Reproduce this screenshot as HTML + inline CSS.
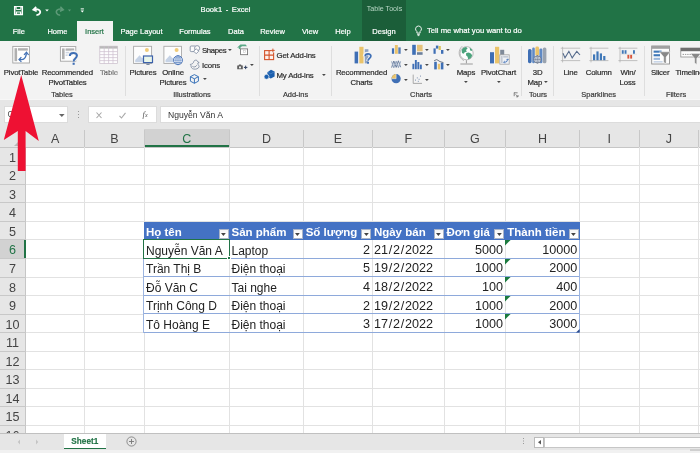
<!DOCTYPE html><html><head><meta charset="utf-8"><title>Excel</title><style>
*{margin:0;padding:0;box-sizing:border-box}
html,body{width:700px;height:453px;overflow:hidden;background:#fff}
body{font-family:"Liberation Sans",sans-serif;position:relative;color:#333;will-change:transform}
.a{position:absolute}
.t{position:absolute;white-space:nowrap;line-height:1}
.c{position:absolute;white-space:nowrap;line-height:1;text-align:center;transform:translateX(-50%)}
.rb{font-size:7.8px;letter-spacing:-0.15px;color:#2b2b2b;-webkit-text-stroke:0.2px #2b2b2b}
.gl{font-size:7.45px;color:#3a3a3a;-webkit-text-stroke:0.2px #3a3a3a}
.tab{font-size:7.5px;color:#fff;-webkit-text-stroke:0.2px currentColor}
.cell{font-size:12px;color:#222}
.num{font-size:12.6px}
.hd{font-size:11.5px;color:#fff;font-weight:bold}
.rh{font-size:12.6px;color:#3c3c3c}
.sep{position:absolute;width:1px;background:#dedede;top:46px;height:50px}
svg{position:absolute;overflow:visible}
</style></head><body>
<div class="a" style="left:0;top:0;width:700px;height:41px;background:#217346"></div>
<div class="a" style="left:362px;top:0;width:44px;height:41px;background:#1b5e39"></div>
<div class="a" style="left:77px;top:21px;width:35.5px;height:21px;background:#f3f3f3"></div>
<div class="c tab" style="left:225.5px;top:6px;font-size:7.6px;word-spacing:1.5px">Book1 - Excel</div>
<div class="c tab" style="left:384.5px;top:6.4px;font-size:7.1px;color:#b9d8c6;-webkit-text-stroke:0">Table Tools</div>
<div class="c tab" style="left:18.8px;top:27.5px;color:#fff">File</div>
<div class="c tab" style="left:57.4px;top:27.5px;color:#fff">Home</div>
<div class="c tab" style="left:94.5px;top:27.5px;color:#217346">Insert</div>
<div class="c tab" style="left:141.5px;top:27.5px;color:#fff">Page Layout</div>
<div class="c tab" style="left:195px;top:27.5px;color:#fff">Formulas</div>
<div class="c tab" style="left:236px;top:27.5px;color:#fff">Data</div>
<div class="c tab" style="left:272.5px;top:27.5px;color:#fff">Review</div>
<div class="c tab" style="left:310px;top:27.5px;color:#fff">View</div>
<div class="c tab" style="left:343px;top:27.5px;color:#fff">Help</div>
<div class="c tab" style="left:384px;top:27.5px;color:#fff">Design</div>
<div class="t tab" style="left:427px;top:27.4px;font-size:7.7px">Tell me what you want to do</div>
<svg style="left:414px;top:25px" width="9" height="12" viewBox="0 0 9 12"><path d="M4.5 1 a3 3 0 0 1 1.6 5.5 v1.6 h-3.2 v-1.6 a3 3 0 0 1 1.6 -5.5z M3.2 9.4h2.6 M3.6 10.6h1.8" fill="none" stroke="#fff" stroke-width="0.9"/></svg>
<svg style="left:13px;top:5px" width="80" height="12" viewBox="0 0 80 12"><path d="M1.7 1.7h7.6v7.8h-7.6z" fill="none" stroke="#fff" stroke-width="1.5"/><path d="M3.2 1.5h4.6v3h-4.6z" fill="#217346" stroke="#fff" stroke-width="0.9"/><path d="M3.4 9.6v-2.6h4.2v2.6" fill="none" stroke="#fff" stroke-width="1.1"/><path d="M23.2 1.8 l-2.9 2.9 l3.4 1.5 M20.6 4.7 c4-1.8 7.6 0.6 6.4 3.4 c-0.6 1.4-2 2-3.6 2.1" fill="none" stroke="#fff" stroke-width="1.7"/><path d="M32.2 4.4h3.6l-1.8 2.1z" fill="#fff"/><path d="M47.4 1.8 l2.9 2.9 l-3.4 1.5 M50 4.7 c-4-1.8-7.6 0.6-6.4 3.4 c0.6 1.4 2 2 3.6 2.1" fill="none" stroke="#5d9a78" stroke-width="1.5"/><path d="M55 4.6h3l-1.5 1.8z" fill="#5d9a78"/><path d="M67.7 3.9h3.2" stroke="#fff" stroke-width="1"/><path d="M67.6 5.6h3.4l-1.7 2z" fill="#fff"/></svg>
<div class="a" style="left:0;top:41px;width:700px;height:59px;background:#f3f3f3"></div>
<div class="a" style="left:0;top:99px;width:700px;height:1px;background:#f7f7f7"></div>
<div class="sep" style="left:124.6px"></div>
<div class="sep" style="left:259px"></div>
<div class="sep" style="left:330.6px"></div>
<div class="sep" style="left:521.3px"></div>
<div class="sep" style="left:553px"></div>
<div class="sep" style="left:643.6px"></div>
<div class="c rb" style="left:21px;top:68.9px;">PivotTable</div>
<div class="c rb" style="left:67.3px;top:68.9px;">Recommended</div>
<div class="c rb" style="left:67.5px;top:79.0px;">PivotTables</div>
<div class="c rb" style="left:109px;top:68.9px;color:#b0b0b0">Table</div>
<div class="c gl" style="left:62px;top:90.6px;">Tables</div>
<div class="c rb" style="left:143px;top:68.9px;">Pictures</div>
<div class="c rb" style="left:173px;top:68.9px;">Online</div>
<div class="c rb" style="left:173px;top:79.0px;">Pictures</div>
<div class="t rb" style="left:202px;top:46.5px;letter-spacing:-0.38px">Shapes</div>
<div class="t rb" style="left:202px;top:61.6px;">Icons</div>
<div class="c gl" style="left:192px;top:90.6px;">Illustrations</div>
<div class="t rb" style="left:276.5px;top:52px;">Get Add-ins</div>
<div class="t rb" style="left:276.5px;top:72px;">My Add-ins</div>
<div class="c gl" style="left:295.5px;top:90.6px;">Add-ins</div>
<div class="c rb" style="left:361.5px;top:68.9px;">Recommended</div>
<div class="c rb" style="left:361.5px;top:79.0px;">Charts</div>
<div class="c gl" style="left:421px;top:90.6px;">Charts</div>
<div class="c rb" style="left:466px;top:68.9px;">Maps</div>
<div class="c rb" style="left:498.5px;top:68.9px;">PivotChart</div>
<div class="c rb" style="left:537.7px;top:68.9px;">3D</div>
<div class="t rb" style="left:527.5px;top:79.0px;">Map</div>
<div class="c gl" style="left:538px;top:90.6px;">Tours</div>
<div class="c rb" style="left:570.5px;top:68.9px;">Line</div>
<div class="c rb" style="left:598.7px;top:68.9px;">Column</div>
<div class="c rb" style="left:628px;top:68.9px;">Win/</div>
<div class="c rb" style="left:627.5px;top:79.0px;">Loss</div>
<div class="c gl" style="left:598.7px;top:90.6px;">Sparklines</div>
<div class="c rb" style="left:660.2px;top:68.9px;">Slicer</div>
<div class="t rb" style="left:675.5px;top:68.9px;">Timeline</div>
<div class="c gl" style="left:676px;top:90.6px;">Filters</div>
<svg style="left:227.6px;top:49px" width="3.8" height="2.1" viewBox="0 0 3.8 2.1"><path d="M0 0h3.8l-1.9 2.1z" fill="#484848"/></svg>
<svg style="left:203.4px;top:78.3px" width="3.8" height="2.1" viewBox="0 0 3.8 2.1"><path d="M0 0h3.8l-1.9 2.1z" fill="#484848"/></svg>
<svg style="left:249.79999999999998px;top:63.7px" width="3.8" height="2.1" viewBox="0 0 3.8 2.1"><path d="M0 0h3.8l-1.9 2.1z" fill="#484848"/></svg>
<svg style="left:322.1px;top:74px" width="3.8" height="2.1" viewBox="0 0 3.8 2.1"><path d="M0 0h3.8l-1.9 2.1z" fill="#484848"/></svg>
<svg style="left:403.70000000000005px;top:49px" width="3.8" height="2.1" viewBox="0 0 3.8 2.1"><path d="M0 0h3.8l-1.9 2.1z" fill="#484848"/></svg>
<svg style="left:403.70000000000005px;top:64px" width="3.8" height="2.1" viewBox="0 0 3.8 2.1"><path d="M0 0h3.8l-1.9 2.1z" fill="#484848"/></svg>
<svg style="left:403.70000000000005px;top:78.5px" width="3.8" height="2.1" viewBox="0 0 3.8 2.1"><path d="M0 0h3.8l-1.9 2.1z" fill="#484848"/></svg>
<svg style="left:424.70000000000005px;top:49px" width="3.8" height="2.1" viewBox="0 0 3.8 2.1"><path d="M0 0h3.8l-1.9 2.1z" fill="#484848"/></svg>
<svg style="left:424.70000000000005px;top:64px" width="3.8" height="2.1" viewBox="0 0 3.8 2.1"><path d="M0 0h3.8l-1.9 2.1z" fill="#484848"/></svg>
<svg style="left:424.70000000000005px;top:78.5px" width="3.8" height="2.1" viewBox="0 0 3.8 2.1"><path d="M0 0h3.8l-1.9 2.1z" fill="#484848"/></svg>
<svg style="left:446.1px;top:49px" width="3.8" height="2.1" viewBox="0 0 3.8 2.1"><path d="M0 0h3.8l-1.9 2.1z" fill="#484848"/></svg>
<svg style="left:446.1px;top:64px" width="3.8" height="2.1" viewBox="0 0 3.8 2.1"><path d="M0 0h3.8l-1.9 2.1z" fill="#484848"/></svg>
<svg style="left:464.1px;top:81px" width="3.8" height="2.1" viewBox="0 0 3.8 2.1"><path d="M0 0h3.8l-1.9 2.1z" fill="#484848"/></svg>
<svg style="left:497.1px;top:81px" width="3.8" height="2.1" viewBox="0 0 3.8 2.1"><path d="M0 0h3.8l-1.9 2.1z" fill="#484848"/></svg>
<svg style="left:544.1px;top:80.5px" width="3.8" height="2.1" viewBox="0 0 3.8 2.1"><path d="M0 0h3.8l-1.9 2.1z" fill="#484848"/></svg>
<svg style="left:0;top:41px" width="700" height="59" viewBox="0 41 700 59">
<!-- PivotTable -->
<g>
<rect x="12.8" y="46.4" width="16.6" height="16.6" fill="#fff" stroke="#a3a3a3" stroke-width="0.9"/>
<rect x="14.5" y="48.2" width="2.6" height="13" fill="#b0b0b0"/>
<rect x="18" y="48.2" width="9.8" height="2.4" fill="#b0b0b0"/>
<path d="M19.6 59.6 H21.8 Q25.8 59.4 26.4 53.2" fill="none" stroke="#3f6fb5" stroke-width="1.4"/>
<path d="M21.4 57.3 L19 59.6 L21.4 61.9" fill="none" stroke="#3f6fb5" stroke-width="1.2"/>
<path d="M24 54.8 L26.5 52.2 L28.6 55" fill="none" stroke="#3f6fb5" stroke-width="1.2"/>
</g>
<!-- Recommended PivotTables -->
<g transform="translate(0.8 0)">
<rect x="59.6" y="46.6" width="15.4" height="14.6" fill="#fff" stroke="#a3a3a3" stroke-width="0.9"/>
<rect x="61.2" y="48.4" width="2.6" height="10.8" fill="#b0b0b0"/>
<rect x="64.8" y="48.4" width="8.6" height="2.3" fill="#b0b0b0"/>
<rect x="64.8" y="51.8" width="3.6" height="1.6" fill="#cfd6e2"/>
<rect x="64.8" y="54.4" width="3.6" height="1.6" fill="#cfd6e2"/>
<path d="M68.4 56 C68.4 51.4 76.8 51.4 76.8 55.6 C76.8 58.4 72.8 58.4 72.8 61.2" fill="none" stroke="#f3f3f3" stroke-width="3.8"/>
<path d="M69 56 C69 52 76.2 52 76.2 55.6 C76.2 58.4 72.8 58.6 72.8 61.4" fill="none" stroke="#3f6fb5" stroke-width="1.9"/>
<rect x="71.8" y="62.7" width="2.1" height="2.1" fill="#3f6fb5"/>
</g>
<!-- Table (disabled) -->
<g>
<rect x="99.8" y="46.2" width="17.6" height="17.4" fill="#fdfdfd" stroke="#c9bdca" stroke-width="0.7"/>
<rect x="99.8" y="46.2" width="17.6" height="2.4" fill="#b9b9b9"/>
<path d="M99.8 51.6h17.6M99.8 54.6h17.6M99.8 57.6h17.6M99.8 60.6h17.6M104.2 46.2v17.4M108.6 46.2v17.4M113 46.2v17.4" stroke="#cdbfce" stroke-width="0.7" fill="none"/>
</g>
<!-- Pictures -->
<g>
<rect x="133.6" y="46.3" width="18" height="17.2" fill="#fdfdfd" stroke="#a9a9a9" stroke-width="0.9"/>
<circle cx="146.9" cy="50.1" r="2" fill="#f0cb78"/>
<path d="M135.2 62.2 L135.2 60 L139.6 55.2 L142.2 58.2 L143.4 57.2 V62.2 Z" fill="#c6d3e6"/>
<rect x="143.5" y="56" width="9" height="6.6" fill="#e9f6ea" stroke="#3d62ab" stroke-width="1.2"/>
<rect x="146.4" y="63.9" width="3.2" height="0.9" fill="#5b6f8f"/>
</g>
<!-- Online Pictures -->
<g>
<rect x="163.9" y="46.3" width="17.6" height="17.2" fill="#fdfdfd" stroke="#a9a9a9" stroke-width="0.9"/>
<circle cx="176.6" cy="50.1" r="2" fill="#f0cb78"/>
<path d="M165.5 62.2 L165.5 60 L169.9 55.2 L172.5 58.2 L173.7 57.2 V62.2 Z" fill="#c6d3e6"/>
<circle cx="178" cy="60.2" r="4.5" fill="#f4f8fd" stroke="#4672b8" stroke-width="0.9"/>
<path d="M173.5 60.2h9M178 55.7v9M174.4 57.9h7.2M174.4 62.5h7.2" stroke="#4672b8" stroke-width="0.55" fill="none"/>
<ellipse cx="178" cy="60.2" rx="2.1" ry="4.5" fill="none" stroke="#4672b8" stroke-width="0.55"/>
</g>
<!-- Shapes -->
<g fill="#fbfbfb" stroke="#76849a" stroke-width="0.8">
<rect x="190.2" y="46" width="5.6" height="5.6" rx="1"/>
<circle cx="197.1" cy="48.2" r="2.6"/>
<path d="M196.2 48.7 l2.5 2.5 l-2.5 2.5 l-2.5-2.5z" fill="#fff"/>
</g>
<!-- Icons (bird) -->
<g fill="none" stroke="#76849a" stroke-width="0.8">
<path d="M193.6 62.2 c0.2-2.6 4-2.8 4.2-0.2 l1.4 0.6 l-1.5 0.8 c0.4 1.8 1.6 2.2 1.4 3.4 c-0.4 1.8-3.2 2.8-5.6 2.2 c-1.8-0.4-2.6-1.8-2.4-3.2 l-0.8-1.4 c1.4-0.2 2.6-0.6 3.3-2.2z"/>
<path d="M192.4 66.4 c1.4 1 3.6 0.6 4.4-1.2"/>
</g>
<!-- 3D models (cube) -->
<g fill="none" stroke="#3a73b9" stroke-width="1">
<path d="M194.4 74.6 l4 2.1 v4.5 l-4 2.1 l-4-2.1 v-4.5z"/>
<path d="M190.4 76.7 l4 2.1 l4-2.1 M194.4 78.8v4.5"/>
</g>
<!-- SmartArt -->
<g>
<path d="M237 47.8 l3.4-3.2 h5.2 l1.4 1.7 h-4.8 l-1.6 1 l0 2 l-1.8-0.2 l0 -1.5z" fill="#5aa886"/>
<rect x="240.6" y="48.9" width="7" height="5.8" fill="#fff" stroke="#6a6a6a" stroke-width="0.8"/>
<rect x="243.4" y="50.7" width="2" height="1.9" fill="none" stroke="#bdbdbd" stroke-width="0.5"/>
</g>
<!-- Screenshot -->
<g>
<rect x="239.2" y="60.4" width="6.2" height="4" fill="#f9f9f9"/>
<path d="M237.2 65.5 h1.3 l0.6-1 h1.9 l0.6 1 h1.2 v3.8 h-5.6z" fill="#5f5f5f"/>
<circle cx="240" cy="67.4" r="1.05" fill="#f3f3f3"/>
<path d="M243.9 67.4h3.5M245.65 65.65v3.5" stroke="#2f3f5f" stroke-width="1"/>
</g>
<!-- Get Add-ins -->
<g fill="none" stroke="#d4552d" stroke-width="1.1">
<rect x="264.6" y="50.6" width="9" height="9" fill="#fdf1ec"/>
<path d="M264.6 55.1h9M269.1 50.6v9"/>
<path d="M271.4 51.2 h2.6 v-2.4" stroke="#f3f3f3" stroke-width="2.4"/>
<path d="M272.9 48.6v3.6M271.1 50.4h3.6" stroke-width="1"/>
</g>
<!-- My Add-ins -->
<g fill="#1b5fae">
<path d="M267.4 72.2 l3.6-2.4 l3.6 1.8 v4.8 l-3.8 2.2 l-3.4-1.6z"/>
<circle cx="266.5" cy="76.8" r="2.5" stroke="#f3f3f3" stroke-width="0.7"/>
<path d="M267.8 72.3 l3 1.5 l3.4-2" fill="none" stroke="#6c9ad2" stroke-width="0.5"/>
</g>
<!-- Recommended Charts -->
<g>
<rect x="354.6" y="51.6" width="3.5" height="11.8" fill="#3f6fb5"/>
<rect x="359.3" y="46.8" width="4.2" height="16.6" fill="#eac36a"/>
<rect x="364.8" y="49.2" width="3.6" height="14.2" fill="#8fa3c2"/>
<path d="M364.6 56.3 C364.6 52.6 371.4 52.6 371.4 56 C371.4 58.4 368 58.4 368 61" fill="none" stroke="#f3f3f3" stroke-width="3.6"/>
<path d="M365.2 56.3 C365.2 53.2 370.9 53.2 370.9 56 C370.9 58.2 368 58.4 368 60.8" fill="none" stroke="#3f6fb5" stroke-width="1.7"/>
<rect x="367.1" y="61.9" width="1.9" height="1.8" fill="#3f6fb5"/>
</g>
<!-- small chart icons row1 -->
<g>
<rect x="391.9" y="48.3" width="2.2" height="5.5" fill="#3f6fb5"/>
<rect x="394.9" y="45" width="2.9" height="8.8" fill="#eac36a"/>
<rect x="398.3" y="47.4" width="2.4" height="6.4" fill="#5b7fb5"/>
<rect x="412.2" y="44.8" width="3.6" height="10" fill="#3f6fb5"/>
<rect x="417" y="44.8" width="5.6" height="6.5" fill="#e6c27a"/>
<rect x="417" y="52.2" width="5.6" height="2.6" fill="#6b7f9c"/>
<rect x="433.5" y="48.4" width="2.2" height="5.4" fill="#3f6fb5"/>
<rect x="435.9" y="45.6" width="2.5" height="3" fill="#3f6fb5"/>
<rect x="438.6" y="46" width="2.2" height="4" fill="#d9c25a"/>
<rect x="441" y="50" width="2.4" height="3.8" fill="#3f6fb5"/>
</g>
<!-- row2 -->
<g>
<path d="M391.6 67.6 l2.2-6.6 l2.4 6.4 l2.2-6.6 l2.2 6.4" fill="none" stroke="#5f7496" stroke-width="0.9"/>
<path d="M391.6 61.4 l2.2 6.4 l2.4-6.6 l2.2 6.4 l2.2-6.2" fill="none" stroke="#8296b6" stroke-width="0.9"/>
<path d="M391.6 64.4 h9" stroke="#b5c2d6" stroke-width="0.5"/>
<rect x="412.4" y="63.8" width="1.9" height="5.4" fill="#3f6fb5"/>
<rect x="414.9" y="60" width="1.9" height="9.2" fill="#3f6fb5"/>
<rect x="417.4" y="62" width="1.9" height="7.2" fill="#3f6fb5"/>
<rect x="419.9" y="64.6" width="1.9" height="4.6" fill="#3f6fb5"/>
<rect x="434.2" y="61.8" width="2.6" height="7.6" fill="#3f6fb5"/>
<rect x="437.8" y="63.8" width="2.2" height="5.6" fill="#eac36a"/>
<rect x="440.8" y="62.8" width="2.6" height="6.6" fill="#3f6fb5"/>
<path d="M434.2 60.6 l2.6 -1 l3.2 2 l3.4 1" fill="none" stroke="#4a5568" stroke-width="0.8"/>
</g>
<!-- row3 -->
<g>
<circle cx="396.1" cy="78.7" r="4.6" fill="#3f6fb5"/>
<path d="M396.1 78.7 V74.1 A4.6 4.6 0 0 0 391.5 78.7 Z" fill="#eac36a"/>
<path d="M396.1 74.1 v4.6 h-4.6" fill="none" stroke="#f3f3f3" stroke-width="0.5"/>
<path d="M413.2 74.6 v8.8 h8.8" fill="none" stroke="#8a8a8a" stroke-width="0.7"/>
<g fill="#7d91b0"><rect x="415" y="79.6" width="1" height="1"/><rect x="416.8" y="77.4" width="1" height="1"/><rect x="418.6" y="78.8" width="1" height="1"/><rect x="420" y="75.6" width="1" height="1"/><rect x="417.8" y="80.8" width="1" height="1"/></g>
</g>
<!-- Maps -->
<g>
<circle cx="466.6" cy="53.2" r="6.6" fill="#fdfdfd" stroke="#aaaaaa" stroke-width="0.8"/>
<path d="M461.6 50.2 c1-2 3-3.2 4.6-3.2 l1.4 1.6 l-1.6 1.4 l0.8 1.8 l-2 0.4 l-1.2 1.6 l-1.6-0.8z" fill="#4ba37c"/>
<path d="M466.2 53 l2.6-0.6 l2.4 1.4 l1 2 l-1.8 2.6 l-2.2 0.8 l-0.6-2.4 l-1.6-1.6z" fill="#4ba37c"/>
<path d="M469.6 47.6 l2 1.6 l0.6 1.8 l-2-0.6z" fill="#4ba37c"/>
<path d="M462.2 46.2 C457.6 50 458.2 58 464 60.6" fill="none" stroke="#aaaaaa" stroke-width="0.8"/>
<path d="M466.4 60.2 v3.2 M460.4 64h12.4" stroke="#9a9a9a" stroke-width="1" fill="none"/>
</g>
<!-- PivotChart -->
<g>
<rect x="490" y="52.2" width="4" height="11.2" fill="#3f6fb5"/>
<rect x="495" y="46.8" width="4.2" height="16.6" fill="#eac36a"/>
<rect x="500.2" y="49.8" width="4" height="8" fill="#7f8a99"/>
<rect x="499.8" y="54.8" width="9.4" height="9.4" fill="#eef1f6" stroke="#a3a3a3" stroke-width="0.8"/>
<rect x="501" y="56" width="1.6" height="7" fill="#c3c9d3"/>
<rect x="503.2" y="56" width="4.8" height="1.6" fill="#c3c9d3"/>
<path d="M503.8 62.2 h1.4 q2.2 0 2.4 -3" fill="none" stroke="#3f6fb5" stroke-width="0.9"/>
<path d="M506.4 60 l1.2-1.2 l1.2 1.2 M504.8 61 l-1.2 1.2 l1.2 1.2" fill="none" stroke="#3f6fb5" stroke-width="0.7"/>
</g>
<!-- 3D Map -->
<g>
<rect x="528" y="49" width="3.6" height="14.2" rx="1.6" fill="#3f6fb5"/>
<rect x="532.2" y="47.6" width="2.6" height="15.6" rx="1.2" fill="#5f8ac6"/>
<rect x="535.4" y="46.6" width="3.6" height="9" rx="1.4" fill="#eac36a"/>
<rect x="539.4" y="48.4" width="3" height="14.8" rx="1.3" fill="#5f8ac6"/>
<rect x="542.8" y="47.6" width="3.6" height="15.6" rx="1.5" fill="#9aa3af"/>
<circle cx="537.4" cy="59.4" r="3.7" fill="#dfe6f0" stroke="#55637a" stroke-width="0.7"/>
<path d="M533.7 59.4h7.4M537.4 55.7v7.4" stroke="#55637a" stroke-width="0.5"/>
<ellipse cx="537.4" cy="59.4" rx="1.7" ry="3.7" fill="none" stroke="#55637a" stroke-width="0.5"/>
</g>
<!-- Sparkline: Line -->
<g>
<path d="M560.8 48.2h19.4M560.8 60.6h19.4M562.6 46.8v15.6" stroke="#b3b3b3" stroke-width="0.8" fill="none"/>
<path d="M563 53.2 L565 57.9 L568.9 51.3 L572.2 57.9 L576.8 51.3 L580 55" fill="none" stroke="#566b8c" stroke-width="1.1"/>
</g>
<!-- Sparkline: Column -->
<g>
<path d="M589.4 48.2h19M589.4 60.6h19M591 46.8v15.6" stroke="#b3b3b3" stroke-width="0.8" fill="none"/>
<rect x="593" y="54.4" width="2.2" height="5.8" fill="#3f78b8"/>
<rect x="596.4" y="51.4" width="2.2" height="8.8" fill="#3f78b8"/>
<rect x="599.8" y="53.4" width="2.2" height="6.8" fill="#3f78b8"/>
<rect x="603.2" y="56" width="2.2" height="4.2" fill="#3f78b8"/>
</g>
<!-- Sparkline: Win/Loss -->
<g>
<path d="M618.4 48.2h19M618.4 60.6h19M620 46.8v15.6" stroke="#b3b3b3" stroke-width="0.8" fill="none"/>
<rect x="621.8" y="50.2" width="1.9" height="3.6" fill="#3f78b8"/>
<rect x="624.6" y="50.2" width="1.9" height="3.6" fill="#3f78b8"/>
<rect x="627.4" y="54.8" width="1.9" height="3.8" fill="#d8553b"/>
<rect x="630.2" y="54.8" width="1.9" height="3.8" fill="#d8553b"/>
<rect x="633" y="50.2" width="1.9" height="3.6" fill="#3f78b8"/>
<path d="M620 54.3h17" stroke="#d0d0d0" stroke-width="0.4"/>
</g>
<!-- Slicer -->
<g>
<rect x="651.7" y="46" width="17.8" height="18" fill="#fdfdfd" stroke="#8f8f8f" stroke-width="0.9"/>
<rect x="651.7" y="46" width="17.8" height="2.8" fill="#a0a0a0"/>
<rect x="653.6" y="50.6" width="8" height="2.1" fill="#3f78b8"/>
<rect x="653.6" y="54.2" width="6.4" height="2.1" fill="#3f78b8"/>
<rect x="653.6" y="57.8" width="6.4" height="2.1" fill="#9cb8dc"/>
<rect x="653.6" y="61" width="9" height="1.6" fill="#c9d6e8"/>
<path d="M659.4 51.8 h11 l-4.3 5.2 v6.8 l-2.4-1.5 v-5.3z" fill="#888" stroke="#fdfdfd" stroke-width="0.5"/>
</g>
<!-- Timeline -->
<g>
<rect x="680.8" y="48" width="22" height="9" fill="#fdfdfd" stroke="#8f8f8f" stroke-width="0.8"/>
<rect x="680.8" y="48" width="22" height="3.2" fill="#6f6f6f"/>
<path d="M682.6 54.4h14" stroke="#9a9a9a" stroke-width="1" stroke-dasharray="1.4 0.9"/>
<path d="M690.6 53.4 h10.4 l-4.2 5 v6 l-2.2-1.4 v-4.6z" fill="#888" stroke="#fdfdfd" stroke-width="0.5"/>
</g>
<!-- dialog launcher -->
<path d="M514.2 92.6 h-0 v3.6 M514 92.8h3.6 M515.6 94.4 l2.2 2.2 M518 95v1.8h-1.8" fill="none" stroke="#666" stroke-width="0.8"/>
</svg>

<div class="a" style="left:0;top:100px;width:700px;height:29px;background:#e6e6e6"></div>
<div class="a" style="left:3.5px;top:106px;width:64.5px;height:17px;background:#fff;border:1px solid #dcdcdc"></div>
<div class="a" style="left:88px;top:106px;width:69px;height:17px;background:#fff;border:1px solid #dcdcdc"></div>
<div class="a" style="left:159.5px;top:106px;width:542px;height:17px;background:#fff;border:1px solid #dcdcdc"></div>
<div class="t" style="left:7.6px;top:110.6px;font-size:8.2px;color:#444">C6</div>
<svg style="left:58.6px;top:113.6px" width="5.6" height="3" viewBox="0 0 5.6 3"><path d="M0 0h5.6l-2.8 3z" fill="#666"/></svg>
<div class="a" style="left:77.6px;top:111.3px;width:1px;height:1px;background:#999;box-shadow:0 3px 0 #999,0 6px 0 #999"></div>
<svg style="left:95px;top:111px" width="60" height="9" viewBox="0 0 60 9"><path d="M1.5 1.5l5 5.5M6.5 1.5l-5 5.5" stroke="#a8a8a8" stroke-width="1.1" fill="none"/><path d="M24.5 4.8l2 2.2l4-5.2" stroke="#a8a8a8" stroke-width="1.1" fill="none"/></svg>
<div class="t" style="left:142.5px;top:110px;font-size:8.5px;font-family:'Liberation Serif',serif;font-style:italic;color:#555">f<span style="font-size:6px">x</span></div>
<div class="t" style="left:168px;top:111px;font-size:8.6px;color:#333">Nguyễn Văn A</div>
<div class="a" style="left:0;top:129px;width:700px;height:18.19999999999999px;background:#e6e6e6"></div>
<div class="a" style="left:144px;top:129px;width:85.5px;height:18.19999999999999px;background:#d2d2d2;border-bottom:2px solid #217346"></div>
<div class="c" style="left:55.1px;top:132.5px;font-size:12.5px;color:#444">A</div>
<div class="c" style="left:114.35px;top:132.5px;font-size:12.5px;color:#444">B</div>
<div class="a" style="left:84.2px;top:130px;width:1px;height:17.19999999999999px;background:#c8c8c8"></div>
<div class="c" style="left:186.75px;top:132.5px;font-size:12.5px;color:#217346">C</div>
<div class="a" style="left:143.5px;top:130px;width:1px;height:17.19999999999999px;background:#c8c8c8"></div>
<div class="c" style="left:266.6px;top:132.5px;font-size:12.5px;color:#444">D</div>
<div class="a" style="left:229.0px;top:130px;width:1px;height:17.19999999999999px;background:#c8c8c8"></div>
<div class="c" style="left:338.0px;top:132.5px;font-size:12.5px;color:#444">E</div>
<div class="a" style="left:303.2px;top:130px;width:1px;height:17.19999999999999px;background:#c8c8c8"></div>
<div class="c" style="left:408.4px;top:132.5px;font-size:12.5px;color:#444">F</div>
<div class="a" style="left:371.8px;top:130px;width:1px;height:17.19999999999999px;background:#c8c8c8"></div>
<div class="c" style="left:474.9px;top:132.5px;font-size:12.5px;color:#444">G</div>
<div class="a" style="left:444.0px;top:130px;width:1px;height:17.19999999999999px;background:#c8c8c8"></div>
<div class="c" style="left:542.45px;top:132.5px;font-size:12.5px;color:#444">H</div>
<div class="a" style="left:504.8px;top:130px;width:1px;height:17.19999999999999px;background:#c8c8c8"></div>
<div class="c" style="left:609.3px;top:132.5px;font-size:12.5px;color:#444">I</div>
<div class="a" style="left:579.1px;top:130px;width:1px;height:17.19999999999999px;background:#c8c8c8"></div>
<div class="c" style="left:668.75px;top:132.5px;font-size:12.5px;color:#444">J</div>
<div class="a" style="left:638.5px;top:130px;width:1px;height:17.19999999999999px;background:#c8c8c8"></div>
<div class="a" style="left:698.0px;top:130px;width:1px;height:17.19999999999999px;background:#c8c8c8"></div>
<svg style="left:14px;top:136px" width="10" height="10" viewBox="0 0 10 10"><path d="M10 0v10h-10z" fill="#b8b8b8"/></svg>
<div class="a" style="left:0;top:147.2px;width:25.5px;height:285.8px;background:#e6e6e6"></div>
<div class="a" style="left:0;top:146.7px;width:700px;height:1px;background:#c6c6c6"></div>
<div class="a" style="left:25.0px;top:147.2px;width:1px;height:285.8px;background:#c6c6c6"></div>
<div class="a" style="left:0;top:239.95px;width:25.5px;height:18.55px;background:#d2d2d2;border-right:2px solid #217346"></div>
<div class="c rh" style="left:12.5px;top:151.7px;color:#444">1</div>
<div class="a" style="left:0;top:165.25px;width:25.5px;height:1px;background:#c8c8c8"></div>
<div class="a" style="left:25.5px;top:165.25px;width:674.5px;height:1px;background:#e2e2e2"></div>
<div class="c rh" style="left:12.5px;top:170.25px;color:#444">2</div>
<div class="a" style="left:0;top:183.8px;width:25.5px;height:1px;background:#c8c8c8"></div>
<div class="a" style="left:25.5px;top:183.8px;width:674.5px;height:1px;background:#e2e2e2"></div>
<div class="c rh" style="left:12.5px;top:188.79999999999998px;color:#444">3</div>
<div class="a" style="left:0;top:202.35px;width:25.5px;height:1px;background:#c8c8c8"></div>
<div class="a" style="left:25.5px;top:202.35px;width:674.5px;height:1px;background:#e2e2e2"></div>
<div class="c rh" style="left:12.5px;top:207.35px;color:#444">4</div>
<div class="a" style="left:0;top:220.9px;width:25.5px;height:1px;background:#c8c8c8"></div>
<div class="a" style="left:25.5px;top:220.9px;width:674.5px;height:1px;background:#e2e2e2"></div>
<div class="c rh" style="left:12.5px;top:225.89999999999998px;color:#444">5</div>
<div class="a" style="left:0;top:239.45px;width:25.5px;height:1px;background:#c8c8c8"></div>
<div class="a" style="left:25.5px;top:239.45px;width:674.5px;height:1px;background:#e2e2e2"></div>
<div class="c rh" style="left:12.5px;top:244.45px;color:#217346">6</div>
<div class="a" style="left:0;top:258.0px;width:25.5px;height:1px;background:#c8c8c8"></div>
<div class="a" style="left:25.5px;top:258.0px;width:674.5px;height:1px;background:#e2e2e2"></div>
<div class="c rh" style="left:12.5px;top:263.0px;color:#444">7</div>
<div class="a" style="left:0;top:276.55px;width:25.5px;height:1px;background:#c8c8c8"></div>
<div class="a" style="left:25.5px;top:276.55px;width:674.5px;height:1px;background:#e2e2e2"></div>
<div class="c rh" style="left:12.5px;top:281.54999999999995px;color:#444">8</div>
<div class="a" style="left:0;top:295.09999999999997px;width:25.5px;height:1px;background:#c8c8c8"></div>
<div class="a" style="left:25.5px;top:295.09999999999997px;width:674.5px;height:1px;background:#e2e2e2"></div>
<div class="c rh" style="left:12.5px;top:300.1px;color:#444">9</div>
<div class="a" style="left:0;top:313.65000000000003px;width:25.5px;height:1px;background:#c8c8c8"></div>
<div class="a" style="left:25.5px;top:313.65000000000003px;width:674.5px;height:1px;background:#e2e2e2"></div>
<div class="c rh" style="left:12.5px;top:318.65px;color:#444">10</div>
<div class="a" style="left:0;top:332.2px;width:25.5px;height:1px;background:#c8c8c8"></div>
<div class="a" style="left:25.5px;top:332.2px;width:674.5px;height:1px;background:#e2e2e2"></div>
<div class="c rh" style="left:12.5px;top:337.2px;color:#444">11</div>
<div class="a" style="left:0;top:350.75px;width:25.5px;height:1px;background:#c8c8c8"></div>
<div class="a" style="left:25.5px;top:350.75px;width:674.5px;height:1px;background:#e2e2e2"></div>
<div class="c rh" style="left:12.5px;top:355.75px;color:#444">12</div>
<div class="a" style="left:0;top:369.3px;width:25.5px;height:1px;background:#c8c8c8"></div>
<div class="a" style="left:25.5px;top:369.3px;width:674.5px;height:1px;background:#e2e2e2"></div>
<div class="c rh" style="left:12.5px;top:374.3px;color:#444">13</div>
<div class="a" style="left:0;top:387.85px;width:25.5px;height:1px;background:#c8c8c8"></div>
<div class="a" style="left:25.5px;top:387.85px;width:674.5px;height:1px;background:#e2e2e2"></div>
<div class="c rh" style="left:12.5px;top:392.85px;color:#444">14</div>
<div class="a" style="left:0;top:406.40000000000003px;width:25.5px;height:1px;background:#c8c8c8"></div>
<div class="a" style="left:25.5px;top:406.40000000000003px;width:674.5px;height:1px;background:#e2e2e2"></div>
<div class="c rh" style="left:12.5px;top:411.4px;color:#444">15</div>
<div class="a" style="left:0;top:424.95px;width:25.5px;height:1px;background:#c8c8c8"></div>
<div class="a" style="left:25.5px;top:424.95px;width:674.5px;height:1px;background:#e2e2e2"></div>
<div class="c rh" style="left:12.5px;top:429.95px;color:#444">16</div>
<div class="a" style="left:0;top:443.5px;width:25.5px;height:1px;background:#c8c8c8"></div>
<div class="a" style="left:25.5px;top:443.5px;width:674.5px;height:1px;background:#e2e2e2"></div>
<div class="a" style="left:84.2px;top:147.2px;width:1px;height:285.8px;background:#e2e2e2"></div>
<div class="a" style="left:143.5px;top:147.2px;width:1px;height:285.8px;background:#e2e2e2"></div>
<div class="a" style="left:229.0px;top:147.2px;width:1px;height:285.8px;background:#e2e2e2"></div>
<div class="a" style="left:303.2px;top:147.2px;width:1px;height:285.8px;background:#e2e2e2"></div>
<div class="a" style="left:371.8px;top:147.2px;width:1px;height:285.8px;background:#e2e2e2"></div>
<div class="a" style="left:444.0px;top:147.2px;width:1px;height:285.8px;background:#e2e2e2"></div>
<div class="a" style="left:504.8px;top:147.2px;width:1px;height:285.8px;background:#e2e2e2"></div>
<div class="a" style="left:579.1px;top:147.2px;width:1px;height:285.8px;background:#e2e2e2"></div>
<div class="a" style="left:638.5px;top:147.2px;width:1px;height:285.8px;background:#e2e2e2"></div>
<div class="a" style="left:698.0px;top:147.2px;width:1px;height:285.8px;background:#e2e2e2"></div>
<div class="a" style="left:143.5px;top:222.39999999999998px;width:436.1px;height:17.95px;background:#4472c4"></div>
<div class="a" style="left:144px;top:239.95px;width:435.6px;height:92.75px;background:#fff"></div>
<div class="a" style="left:229.0px;top:239.95px;width:1px;height:92.75px;background:#e2e2e2"></div>
<div class="a" style="left:303.2px;top:239.95px;width:1px;height:92.75px;background:#e2e2e2"></div>
<div class="a" style="left:371.8px;top:239.95px;width:1px;height:92.75px;background:#e2e2e2"></div>
<div class="a" style="left:444.0px;top:239.95px;width:1px;height:92.75px;background:#e2e2e2"></div>
<div class="a" style="left:504.8px;top:239.95px;width:1px;height:92.75px;background:#e2e2e2"></div>
<div class="a" style="left:143.5px;top:257.8px;width:436.6px;height:1px;background:#8ea9db"></div>
<div class="a" style="left:143.5px;top:276.35px;width:436.6px;height:1px;background:#8ea9db"></div>
<div class="a" style="left:143.5px;top:294.9px;width:436.6px;height:1px;background:#8ea9db"></div>
<div class="a" style="left:143.5px;top:313.45000000000005px;width:436.6px;height:1px;background:#8ea9db"></div>
<div class="a" style="left:143.5px;top:332.0px;width:436.6px;height:1px;background:#8ea9db"></div>
<div class="a" style="left:143.3px;top:239.95px;width:1px;height:92.75px;background:#9db5e0"></div>
<div class="a" style="left:579.0px;top:239.95px;width:1px;height:92.75px;background:#9db5e0"></div>
<div class="t hd" style="left:146.0px;top:226.99999999999997px">Họ tên</div>
<div class="a" style="left:218.5px;top:228.99999999999997px;width:10px;height:10.4px;background:linear-gradient(#f4f4f4,#fff 60%);border:0.6px solid #aab4c8"></div>
<svg style="left:221.1px;top:233.39999999999998px" width="4.8" height="3" viewBox="0 0 4.8 3"><path d="M0 0h4.8l-2.4 3z" fill="#444"/></svg>
<div class="t hd" style="left:231.5px;top:226.99999999999997px">Sản phẩm</div>
<div class="a" style="left:292.7px;top:228.99999999999997px;width:10px;height:10.4px;background:linear-gradient(#f4f4f4,#fff 60%);border:0.6px solid #aab4c8"></div>
<svg style="left:295.3px;top:233.39999999999998px" width="4.8" height="3" viewBox="0 0 4.8 3"><path d="M0 0h4.8l-2.4 3z" fill="#444"/></svg>
<div class="t hd" style="left:305.7px;top:226.99999999999997px">Số lượng</div>
<div class="a" style="left:361.3px;top:228.99999999999997px;width:10px;height:10.4px;background:linear-gradient(#f4f4f4,#fff 60%);border:0.6px solid #aab4c8"></div>
<svg style="left:363.90000000000003px;top:233.39999999999998px" width="4.8" height="3" viewBox="0 0 4.8 3"><path d="M0 0h4.8l-2.4 3z" fill="#444"/></svg>
<div class="t hd" style="left:373.90000000000003px;top:226.99999999999997px">Ngày bán</div>
<div class="a" style="left:433.5px;top:228.99999999999997px;width:10px;height:10.4px;background:linear-gradient(#f4f4f4,#fff 60%);border:0.6px solid #aab4c8"></div>
<svg style="left:436.1px;top:233.39999999999998px" width="4.8" height="3" viewBox="0 0 4.8 3"><path d="M0 0h4.8l-2.4 3z" fill="#444"/></svg>
<div class="t hd" style="left:446.5px;top:226.99999999999997px">Đơn giá</div>
<div class="a" style="left:494.3px;top:228.99999999999997px;width:10px;height:10.4px;background:linear-gradient(#f4f4f4,#fff 60%);border:0.6px solid #aab4c8"></div>
<svg style="left:496.90000000000003px;top:233.39999999999998px" width="4.8" height="3" viewBox="0 0 4.8 3"><path d="M0 0h4.8l-2.4 3z" fill="#444"/></svg>
<div class="t hd" style="left:507.3px;top:226.99999999999997px">Thành tiền</div>
<div class="a" style="left:568.6px;top:228.99999999999997px;width:10px;height:10.4px;background:linear-gradient(#f4f4f4,#fff 60%);border:0.6px solid #aab4c8"></div>
<svg style="left:571.2px;top:233.39999999999998px" width="4.8" height="3" viewBox="0 0 4.8 3"><path d="M0 0h4.8l-2.4 3z" fill="#444"/></svg>
<div class="t cell" style="left:146.0px;top:244.55px">Nguyễn Văn A</div>
<div class="t cell" style="left:231.5px;top:244.55px">Laptop</div>
<div class="t cell num" style="right:330.0px;top:243.85px">2</div>
<div class="t cell num" style="left:373.90000000000003px;top:243.85px">21<span style="padding:0 0.75px">/</span>2<span style="padding:0 0.75px">/</span>2022</div>
<div class="t cell num" style="right:197.0px;top:243.85px">5000</div>
<div class="t cell num" style="right:122.69999999999993px;top:243.85px">10000</div>
<svg style="left:505.3px;top:239.95px" width="5.6" height="5.6" viewBox="0 0 5 5"><path d="M0 0h5l-5 5z" fill="#1b7a3e"/></svg>
<div class="t cell" style="left:146.0px;top:263.1px">Trần Thị B</div>
<div class="t cell" style="left:231.5px;top:263.1px">Điện thoại</div>
<div class="t cell num" style="right:330.0px;top:262.40000000000003px">5</div>
<div class="t cell num" style="left:373.90000000000003px;top:262.40000000000003px">19<span style="padding:0 0.75px">/</span>2<span style="padding:0 0.75px">/</span>2022</div>
<div class="t cell num" style="right:197.0px;top:262.40000000000003px">1000</div>
<div class="t cell num" style="right:122.69999999999993px;top:262.40000000000003px">2000</div>
<svg style="left:505.3px;top:258.5px" width="5.6" height="5.6" viewBox="0 0 5 5"><path d="M0 0h5l-5 5z" fill="#1b7a3e"/></svg>
<div class="t cell" style="left:146.0px;top:281.65px">Đỗ Văn C</div>
<div class="t cell" style="left:231.5px;top:281.65px">Tai nghe</div>
<div class="t cell num" style="right:330.0px;top:280.95px">4</div>
<div class="t cell num" style="left:373.90000000000003px;top:280.95px">18<span style="padding:0 0.75px">/</span>2<span style="padding:0 0.75px">/</span>2022</div>
<div class="t cell num" style="right:197.0px;top:280.95px">100</div>
<div class="t cell num" style="right:122.69999999999993px;top:280.95px">400</div>
<svg style="left:505.3px;top:277.04999999999995px" width="5.6" height="5.6" viewBox="0 0 5 5"><path d="M0 0h5l-5 5z" fill="#1b7a3e"/></svg>
<div class="t cell" style="left:146.0px;top:300.20000000000005px">Trịnh Công D</div>
<div class="t cell" style="left:231.5px;top:300.20000000000005px">Điện thoại</div>
<div class="t cell num" style="right:330.0px;top:299.50000000000006px">2</div>
<div class="t cell num" style="left:373.90000000000003px;top:299.50000000000006px">19<span style="padding:0 0.75px">/</span>2<span style="padding:0 0.75px">/</span>2022</div>
<div class="t cell num" style="right:197.0px;top:299.50000000000006px">1000</div>
<div class="t cell num" style="right:122.69999999999993px;top:299.50000000000006px">2000</div>
<svg style="left:505.3px;top:295.6px" width="5.6" height="5.6" viewBox="0 0 5 5"><path d="M0 0h5l-5 5z" fill="#1b7a3e"/></svg>
<div class="t cell" style="left:146.0px;top:318.75px">Tô Hoàng E</div>
<div class="t cell" style="left:231.5px;top:318.75px">Điện thoại</div>
<div class="t cell num" style="right:330.0px;top:318.05px">3</div>
<div class="t cell num" style="left:373.90000000000003px;top:318.05px">17<span style="padding:0 0.75px">/</span>2<span style="padding:0 0.75px">/</span>2022</div>
<div class="t cell num" style="right:197.0px;top:318.05px">1000</div>
<div class="t cell num" style="right:122.69999999999993px;top:318.05px">3000</div>
<svg style="left:505.3px;top:314.15px" width="5.6" height="5.6" viewBox="0 0 5 5"><path d="M0 0h5l-5 5z" fill="#1b7a3e"/></svg>
<div class="a" style="left:143px;top:238.95px;width:87.0px;height:20.05px;border:1.5px solid #217346"></div>
<div class="a" style="left:227.2px;top:256.2px;width:4.2px;height:4.2px;background:#217346;border:0.6px solid #fff"></div>
<svg style="left:576.4px;top:329.3px" width="3.6" height="3.6" viewBox="0 0 4.5 4.5"><path d="M4.5 0v4.5h-4.5z" fill="#2a4a8c"/></svg>
<div class="a" style="left:0;top:433px;width:700px;height:20px;background:#e6e6e6"></div>
<div class="a" style="left:0;top:433px;width:700px;height:1px;background:#c0c0c0"></div>
<div class="a" style="left:0;top:450px;width:700px;height:3px;background:#f1f1f1"></div>
<div class="a" style="left:63.5px;top:433.5px;width:42px;height:15.5px;background:#fff;border-bottom:1.4px solid #217346"></div>
<div class="c" style="left:84.8px;top:438.1px;font-size:8.2px;-webkit-text-stroke:0.15px #217346;font-weight:bold;color:#217346">Sheet1</div>
<svg style="left:125.8px;top:436.3px" width="11" height="11" viewBox="0 0 11 11"><circle cx="5.5" cy="5.5" r="4.6" fill="none" stroke="#777" stroke-width="0.8"/><path d="M3 5.5h5M5.5 3v5" stroke="#777" stroke-width="0.9"/></svg>
<svg style="left:17px;top:439px" width="24" height="6" viewBox="0 0 24 6"><path d="M3 0.5L0.8 3L3 5.5z" fill="#c4c4c4"/><path d="M19 0.5L21.2 3L19 5.5z" fill="#c4c4c4"/></svg>
<div class="a" style="left:523.3px;top:438.3px;width:1px;height:1px;background:#999;box-shadow:0 2.5px 0 #999,0 5px 0 #999"></div>
<div class="a" style="left:534.3px;top:437.2px;width:9.6px;height:10.4px;background:#fff;border:0.6px solid #bbb"></div>
<svg style="left:537.6px;top:440.2px" width="3" height="4.4" viewBox="0 0 3 4.4"><path d="M3 0v4.4l-3-2.2z" fill="#555"/></svg>
<div class="a" style="left:544px;top:437.2px;width:156px;height:10.4px;background:#fff;border:0.6px solid #c6c6c6;border-right:0"></div>
<svg style="left:0;top:70px" width="45" height="105" viewBox="0 70 45 105"><path d="M21.2 75 L38.8 141 L25.6 131 L25.6 171 L17.8 171 L17.8 131 L3.8 140 Z" fill="#ee1133"/></svg>
<div class="a" style="left:690px;top:449px;width:10px;height:2px;background:#cfcfcf"></div>
</body></html>
